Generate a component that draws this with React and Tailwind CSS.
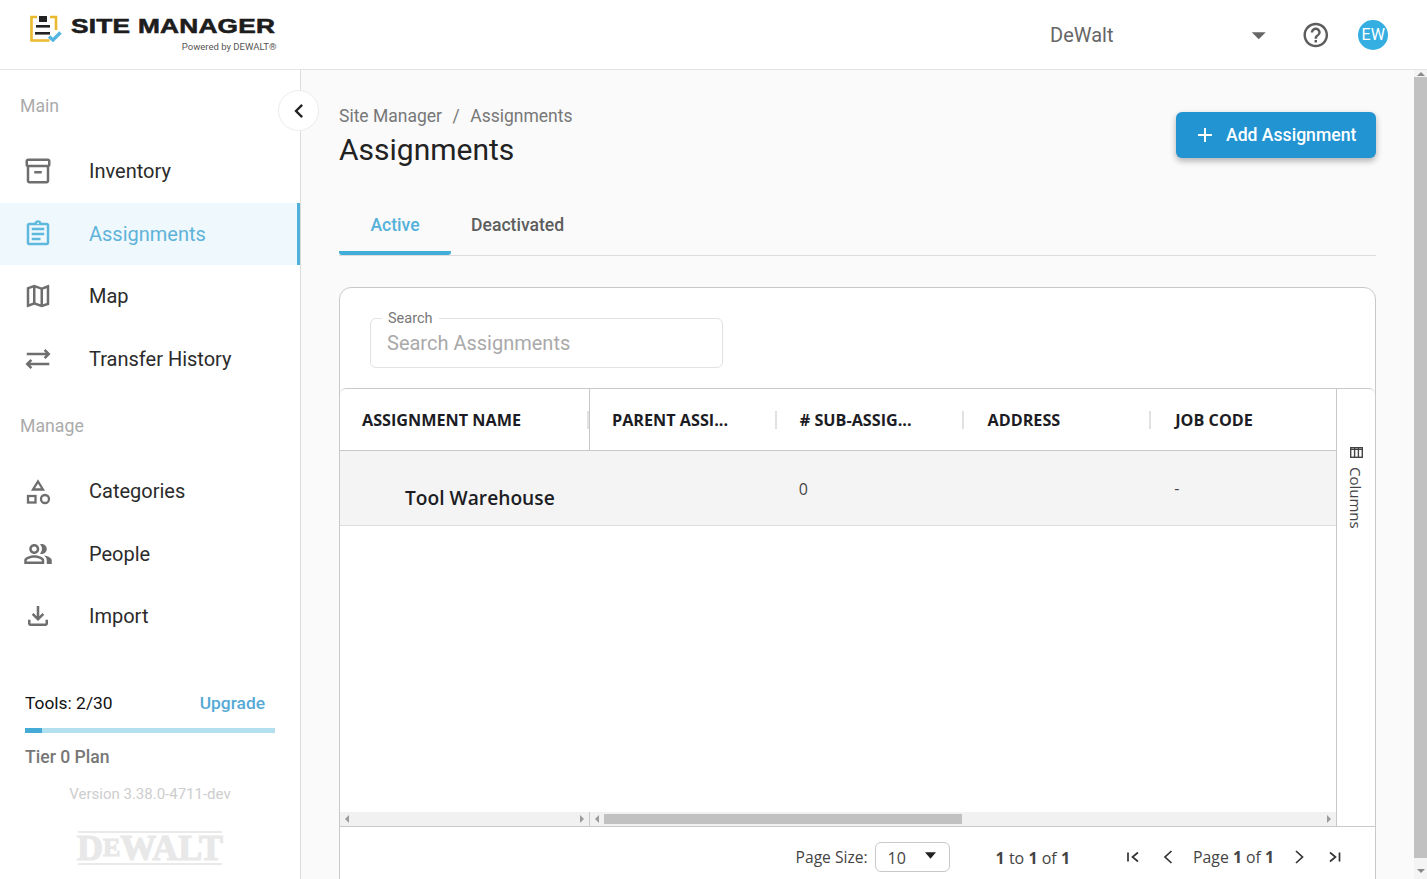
import {
  MdOutlineInventory2,
  MdOutlineAssignment,
  MdOutlineMap,
  MdOutlinePeopleAlt,
  MdOutlineFileDownload,
  MdHelpOutline,
  MdArrowDropDown,
  MdChevronLeft,
  MdAdd,
} from 'react-icons/md';

const TransferIcon = (props) => (
  <svg viewBox="0 0 24 24" fill="currentColor" {...props}>
    <path d="M7.41 13.41 6 12l-4 4 4 4 1.41-1.41L5.83 17H21v-2H5.83zm9.18-2.82L18 12l4-4-4-4-1.41 1.41L18.17 7H3v2h15.17z" />
  </svg>
);

const ShapesIcon = (props) => (
  <svg viewBox="0 0 30 30" fill="none" stroke="currentColor" strokeWidth="2.3" {...props}>
    <path d="M15 5.5 20 13.5H10z" />
    <rect x="5" y="20" width="7.5" height="6.5" />
    <circle cx="22" cy="23" r="4" />
  </svg>
);

// thin pager glyphs, the icon packs draw these too heavy
const PagerIcon = ({ d }) => (
  <svg viewBox="0 0 24 24" fill="none" stroke="#333" strokeWidth="1.7" className="h-[24px] w-[24px] shrink-0">
    <path d={d} />
  </svg>
);

const mainLinks = [
  { label: 'Inventory', icon: MdOutlineInventory2 },
  { label: 'Assignments', icon: MdOutlineAssignment, active: true },
  { label: 'Map', icon: MdOutlineMap },
  { label: 'Transfer History', icon: TransferIcon },
];

const manageLinks = [
  { label: 'Categories', icon: ShapesIcon },
  { label: 'People', icon: MdOutlinePeopleAlt },
  { label: 'Import', icon: MdOutlineFileDownload },
];

const columns = [
  { label: 'Parent Assi...', width: 'w-[187px] pl-[22px]' },
  { label: '# Sub-Assig...', width: 'w-[187px] pl-[23px]' },
  { label: 'Address', width: 'w-[188px] pl-[24px]' },
  { label: 'Job Code', width: 'w-[185px] pl-[24px]', last: true },
];

function NavLink({ label, icon: Icon, active }) {
  return (
    <a
      className={
        active
          ? 'flex h-[62.5px] items-center border-r-[3px] border-[#4fb0d9] bg-[#eff8fc] text-[#5fb3d9]'
          : 'flex h-[62.5px] items-center text-[#2b2b2b]'
      }
    >
      <span className={active ? 'flex w-[89px] justify-center pr-[13px] text-[#5fb8dd]' : 'flex w-[89px] justify-center pr-[13px] text-[#6e6e6e]'}>
        <Icon className="h-[30px] w-[30px]" />
      </span>
      <span className="text-[20px]">{label}</span>
    </a>
  );
}

function Logo() {
  return (
    <div className="relative flex h-[69px] w-[300px] items-start pl-[30px] pt-[14px]">
      <svg viewBox="0 0 33 28" className="h-[28px] w-[33px]">
        <path d="M7 3H1.5v23.5h18M20 3h6v13" fill="none" stroke="#eab92d" strokeWidth="2.6" />
        <rect x="9" y="2" width="8" height="6" fill="#222" />
        <rect x="6" y="11" width="14" height="2.6" fill="#222" />
        <rect x="5" y="18" width="15" height="2.6" fill="#222" />
        <path d="M19 22.5l4 3.5 7.5-7.5" fill="none" stroke="#55b4e0" strokeWidth="3.4" />
      </svg>
      <div className="ml-[8px] flex flex-col items-end">
        <span className="origin-left scale-x-[1.25] pr-[42px] text-[21px] leading-[24px] font-black tracking-[0.2px] text-[#1d1d1d] [-webkit-text-stroke:0.6px_#1d1d1d] [font-family:'Liberation_Sans',sans-serif]">
          SITE MANAGER
        </span>
        <span className="mt-[3px] text-[9.5px] leading-[12px] text-[#555]">Powered by DEWALT®</span>
      </div>
    </div>
  );
}

function Sidebar() {
  return (
    <aside className="flex w-[301px] shrink-0 flex-col border-r border-[#dcdcdc] bg-white pt-[24px]">
      <div className="pl-[20px] text-[17.7px] leading-[24px] text-[#ababab]">Main</div>
      <nav className="mt-[22px]">
        {mainLinks.map((link) => (
          <NavLink key={link.label} {...link} />
        ))}
      </nav>
      <div className="mt-[24px] pl-[20px] text-[17.7px] leading-[24px] text-[#ababab]">Manage</div>
      <nav className="mt-[22px]">
        {manageLinks.map((link) => (
          <NavLink key={link.label} {...link} />
        ))}
      </nav>
      <div className="mt-[43px] px-[25px]">
        <div className="flex items-center justify-between pr-[10px] text-[17.4px] leading-[24px]">
          <span className="text-[#111]">Tools: 2/30</span>
          <span className="font-medium text-[#55a9d6]">Upgrade</span>
        </div>
        <div className="mt-[13px] h-[5px] bg-[#b3e0ee]">
          <div className="h-full w-[17px] bg-[#45aad6]" />
        </div>
        <div className="mt-[12px] text-[17.6px] leading-[24px] font-medium text-[#777]">Tier 0 Plan</div>
        <div className="mt-[13px] text-center text-[15px] leading-[24px] text-[#cdcdcd]">Version 3.38.0-4711-dev</div>
        <div className="mx-auto mt-[25px] flex h-[34px] w-[144px] items-center justify-center border-y-2 border-[#e9e9e9] text-[36px] leading-[28px] font-bold text-[#e8e8e8] [-webkit-text-stroke:1.2px_#e8e8e8] [font-family:'Liberation_Serif',serif]">
          D<span className="text-[26px]">E</span>WALT
        </div>
      </div>
    </aside>
  );
}

function HeaderCell({ label, width, last }) {
  return (
    <div className={`relative flex h-full items-center pt-[2px] ${width}`}>
      <span className="whitespace-nowrap text-[16.2px] font-bold text-[#1c1c24] uppercase">{label}</span>
      {!last && <span className="absolute top-[22px] right-0 h-[18px] w-[2px] bg-[#e2e2e2]" />}
    </div>
  );
}

function ScrollArrow({ left, className = '' }) {
  return (
    <svg viewBox="0 0 6 8" className={`h-[8px] w-[6px] ${className}`} fill="#9b9b9b">
      <path d={left ? 'M5 0v8L1 4z' : 'M1 0v8l4-4z'} />
    </svg>
  );
}

function AssignmentsTable() {
  return (
    <div className="mt-[31px] h-[640px] rounded-[12px] border border-[#c9c9c9] bg-white">
      <div className="h-[100px] pt-[30px] pl-[30px]">
        <div className="relative flex h-[50px] w-[353px] items-center rounded-[6px] border border-[#e2e2e2] pl-[16px] text-[20px] text-[#a9a9a9]">
          <span className="absolute top-[-9px] left-[11px] bg-white px-[6px] text-[14.5px] leading-[17px] text-[#777]">Search</span>
          <span>Search Assignments</span>
        </div>
      </div>
      <div className="flex h-[439px] rounded-t-[6px] border-y border-[#c9c9c9] [font-family:'Open_Sans',sans-serif]">
        <div className="flex min-w-0 flex-1 flex-col">
          <div className="flex h-[62px] border-b border-[#c9c9c9]">
            <div className="relative flex w-[250px] shrink-0 items-center border-r border-[#c9c9c9] pt-[2px] pl-[22px]">
              <span className="text-[16.2px] font-bold text-[#1c1c24] uppercase">Assignment Name</span>
              <span className="absolute top-[22px] right-0 h-[18px] w-[2px] bg-[#e2e2e2]" />
            </div>
            {columns.map((col) => (
              <HeaderCell key={col.label} {...col} />
            ))}
          </div>
          <div className="flex h-[75px] border-b border-[#dedede] bg-[#f4f4f4]">
            <div className="w-[250px] shrink-0 pt-[33px] pl-[65px] text-[19.2px] leading-[28px] font-semibold text-[#1c1c24]">Tool Warehouse</div>
            <div className="w-[187px]" />
            <div className="w-[187px] pt-[26px] pl-[22px] text-[16px] leading-[24px] text-[#444]">0</div>
            <div className="w-[188px]" />
            <div className="w-[185px] pt-[25px] pl-[23px] text-[16px] leading-[24px] text-[#444]">-</div>
          </div>
          <div className="flex-1" />
          <div className="flex h-[14px] items-center bg-[#f1f1f1]">
            <div className="flex h-full w-[250px] shrink-0 items-center justify-between border-r border-[#c9c9c9] px-[4px]">
              <ScrollArrow left />
              <ScrollArrow />
            </div>
            <div className="flex h-full flex-1 items-center pl-[4px]">
              <ScrollArrow left />
              <div className="ml-[4px] h-[10px] w-[358px] bg-[#c1c1c1]" />
              <ScrollArrow className="ml-auto mr-[4px]" />
            </div>
          </div>
        </div>
        <div className="flex w-[39px] shrink-0 flex-col items-center border-l border-[#c9c9c9] pt-[58px] text-[#444]">
          <svg viewBox="0 0 13 11" className="h-[11px] w-[13px]" fill="none" stroke="currentColor" strokeWidth="1.4">
            <rect x="0.7" y="0.7" width="11.6" height="9.6" />
            <path d="M0.7 2.4h11.6M4.6 0.7v9.6M8.4 0.7v9.6" />
          </svg>
          <span className="mt-[9px] text-[15px] leading-[18px] [writing-mode:vertical-rl]">Columns</span>
        </div>
      </div>
      <div className="flex h-[60px] items-center justify-end text-[#444] [font-family:'Open_Sans',sans-serif]">
        <span className="pt-[2px] text-[15.6px]">Page Size:</span>
        <div className="ml-[7px] flex h-[30px] w-[75px] items-center justify-between rounded-[6px] border border-[#c9c9c9] pr-[13px] pl-[12px] text-[16px]">
          <span className="pt-[1px]">10</span>
          <svg viewBox="0 0 12 7" className="mb-[3px] h-[7px] w-[11px]" fill="#222">
            <path d="M0 0h12L6 7z" />
          </svg>
        </div>
        <span className="ml-[46px] pt-[2px] text-[16px]">
          <b>1</b> to <b>1</b> of <b>1</b>
        </span>
        <span className="ml-[51px]">
          <PagerIcon d="M7 7.500v9M17 7.500 11.500 12l5.500 4.500" />
        </span>
        <span className="ml-[11px]">
          <PagerIcon d="M15.500 6 9 12l6.500 6" />
        </span>
        <span className="ml-[13px] pt-[2px] text-[15.8px]">
          Page <b>1</b> of <b>1</b>
        </span>
        <span className="ml-[13px]">
          <PagerIcon d="M9 6l6.500 6L9 18" />
        </span>
        <span className="mr-[29px] ml-[11px]">
          <PagerIcon d="M8 7.500 13.500 12 8 16.500M17.500 7.500v9" />
        </span>
      </div>
    </div>
  );
}

export default function App() {
  return (
    <div className="flex h-screen flex-col overflow-hidden bg-white [font-family:Roboto,sans-serif]">
      <header className="flex h-[70px] shrink-0 items-center border-b border-[#e4e4e4] bg-white">
        <Logo />
        <div className="ml-[750px] flex h-full w-[338px] items-center pt-[1px]">
          <span className="text-[20px] text-[#666]">DeWalt</span>
          <MdArrowDropDown className="ml-[129px] h-[34px] w-[34px] text-[#666]" />
          <MdHelpOutline className="ml-[25px] h-[30px] w-[30px] text-[#5d5d5d]" />
          <div className="ml-[28px] flex h-[30px] w-[30px] items-center justify-center rounded-full bg-[#35aee2] text-[16px] text-white">EW</div>
        </div>
      </header>
      <div className="relative flex min-h-0 flex-1">
        <Sidebar />
        <button className="absolute top-[20px] left-[278px] z-10 flex h-[41px] w-[41px] items-center justify-center rounded-full border border-[#ececec] bg-white text-[#222]">
          <MdChevronLeft className="h-[28px] w-[28px]" />
        </button>
        <main className="min-w-0 flex-1 overflow-hidden bg-[#fafafa] pt-[34px] pr-[38px] pl-[38px]">
          <div className="flex items-start justify-between">
            <div>
              <div className="flex text-[17.5px] leading-[24px] text-[#777]">
                <span>Site Manager</span>
                <span className="mx-[10.5px]">/</span>
                <span>Assignments</span>
              </div>
              <h1 className="mt-[2px] text-[30px] leading-[40px] font-normal text-[#222]">Assignments</h1>
            </div>
            <button className="mt-[8px] flex h-[46px] w-[200px] items-center rounded-[6px] bg-[#2294d2] pl-[17px] text-[17.6px] font-medium text-white shadow-[0_3px_6px_rgba(0,0,0,0.3)]">
              <MdAdd className="h-[24px] w-[24px]" />
              <span className="ml-[9px]">Add Assignment</span>
            </button>
          </div>
          <div className="mt-[30px] flex h-[56px] border-b border-[#dcdcdc] text-[17.6px] font-medium">
            <div className="flex h-[55px] w-[112px] items-center justify-center rounded-b-[3px] border-b-4 border-[#42add8] pb-[1px] text-[#55b1da]">Active</div>
            <div className="ml-[20px] flex h-[55px] items-center pb-[5px] text-[#5d5d5d]">Deactivated</div>
          </div>
          <AssignmentsTable />
        </main>
        <div className="flex w-[13px] shrink-0 flex-col items-center bg-[#f4f4f4]">
          <svg viewBox="0 0 8 4" className="mt-[2px] h-[4px] w-[8px]" fill="#8a8a8a">
            <path d="M0 4h8L4 0z" />
          </svg>
          <div className="mt-[1px] h-[781px] w-full bg-[#c1c1c1]" />
          <svg viewBox="0 0 8 4" className="mt-[11px] h-[4px] w-[8px]" fill="#8a8a8a">
            <path d="M0 0h8L4 4z" />
          </svg>
        </div>
      </div>
    </div>
  );
}
